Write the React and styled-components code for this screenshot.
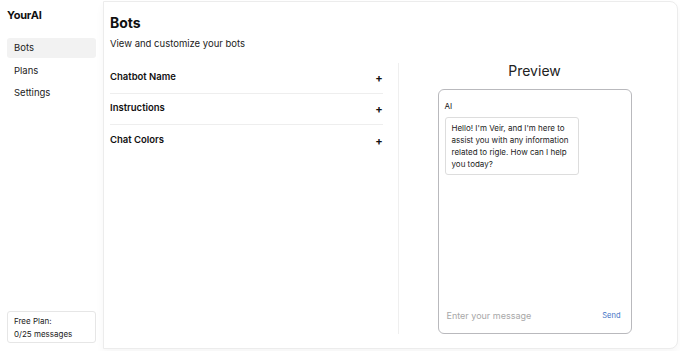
import React from "react";
import styled, { createGlobalStyle } from "styled-components";

const Global = createGlobalStyle`
  html, body { margin: 0; padding: 0; background: #ffffff; }
  body { font-family: Inter, "Liberation Sans", Arial, sans-serif; color: #111; }
  * { box-sizing: border-box; }
`;

const Shell = styled.div`
  display: flex;
  width: 680px;
  height: 351px;
  overflow: hidden;
`;

const Sidebar = styled.aside`
  width: 103px;
  flex-shrink: 0;
  display: flex;
  flex-direction: column;
  padding: 8px 7px 8px 7px;
  background: #ffffff;
`;

const Logo = styled.div`
  font-size: 11px;
  font-weight: 700;
  letter-spacing: -0.2px;
  height: 14px;
  line-height: 14px;
  margin-bottom: 16px;
`;

const Nav = styled.nav`
  display: flex;
  flex-direction: column;
  gap: 3px;
`;

const NavItem = styled.div`
  height: 19.5px;
  display: flex;
  align-items: center;
  padding-left: 7px;
  font-size: 9.5px;
  border-radius: 3px;
  color: #222;
  background: ${(p) => (p.$active ? "#f2f2f2" : "transparent")};
`;

const PlanBox = styled.div`
  margin-top: auto;
  border: 1px solid #e6e6e6;
  border-radius: 3px;
  background: #fff;
  padding: 3px 6px 1px;
  font-size: 8px;
  line-height: 13px;
  color: #222;
`;

const Main = styled.main`
  flex: 1;
  margin: 1px 2px 2px 0;
  background: #fff;
  border: 1px solid #ececec;
  border-radius: 0 8px 8px 0;
  box-shadow: 0 4px 8px rgba(0, 0, 0, 0.04);
  display: flex;
  flex-direction: column;
  padding: 12px 7px 14px 6px;
  min-height: 0;
`;

const Title = styled.h1`
  margin: 0;
  font-size: 14px;
  font-weight: 700;
  line-height: 18px;
`;

const Subtitle = styled.p`
  margin: 6px 0 0;
  font-size: 9.5px;
  line-height: 12px;
  color: #222;
`;

const Columns = styled.div`
  display: flex;
  flex: 1;
  margin-top: 13px;
  min-height: 0;
`;

const LeftCol = styled.div`
  width: 289px;
  padding-right: 15px;
  border-right: 1px solid #efefef;
`;

const Row = styled.div`
  display: flex;
  justify-content: space-between;
  align-items: center;
  height: 31px;
  padding-bottom: 3px;
  border-bottom: ${(p) => (p.$last ? "none" : "1px solid #eeeeee")};
  font-size: 9.5px;
  font-weight: 600;
  color: #111;
`;

const Plus = styled.span`
  font-size: 11px;
  font-weight: 700;
  width: 8px;
  text-align: center;
  margin-top: 3px;
`;

const RightCol = styled.div`
  flex: 1;
  display: flex;
  flex-direction: column;
  align-items: center;
`;

const PreviewTitle = styled.div`
  font-size: 14px;
  line-height: 16px;
  color: #222;
`;

const ChatBox = styled.div`
  width: 194px;
  flex: 1;
  margin-top: 10px;
  border: 1px solid #b9b9bd;
  border-radius: 6px;
  display: flex;
  flex-direction: column;
  padding: 11px 6px 12px 6px;
`;

const Sender = styled.div`
  font-size: 8px;
  line-height: 10px;
  color: #111;
`;

const Bubble = styled.div`
  margin-top: 6px;
  width: 134px;
  border: 1px solid #dddddd;
  border-radius: 3px;
  padding: 4px 6px 4px 6px;
  font-size: 8px;
  line-height: 12px;
  color: #222;
`;

const InputRow = styled.div`
  margin-top: auto;
  display: flex;
  justify-content: space-between;
  align-items: center;
  padding: 0 4px 0 2px;
`;

const Placeholder = styled.span`
  font-size: 9px;
  color: #a8a8a8;
`;

const Send = styled.span`
  font-size: 7.5px;
  color: #3b6fc4;
`;

export default function App() {
  return (
    <>
      <Global />
      <Shell>
        <Sidebar>
          <Logo>YourAI</Logo>
          <Nav>
            <NavItem $active>Bots</NavItem>
            <NavItem>Plans</NavItem>
            <NavItem>Settings</NavItem>
          </Nav>
          <PlanBox>
            Free Plan:
            <br />
            0/25 messages
          </PlanBox>
        </Sidebar>
        <Main>
          <Title>Bots</Title>
          <Subtitle>View and customize your bots</Subtitle>
          <Columns>
            <LeftCol>
              <Row>
                Chatbot Name<Plus>+</Plus>
              </Row>
              <Row>
                Instructions<Plus>+</Plus>
              </Row>
              <Row $last>
                Chat Colors<Plus>+</Plus>
              </Row>
            </LeftCol>
            <RightCol>
              <PreviewTitle>Preview</PreviewTitle>
              <ChatBox>
                <Sender>AI</Sender>
                <Bubble>
                  Hello! I'm Veir, and I'm here to assist you with any information related to rigle. How can I help you today?
                </Bubble>
                <InputRow>
                  <Placeholder>Enter your message</Placeholder>
                  <Send>Send</Send>
                </InputRow>
              </ChatBox>
            </RightCol>
          </Columns>
        </Main>
      </Shell>
    </>
  );
}
